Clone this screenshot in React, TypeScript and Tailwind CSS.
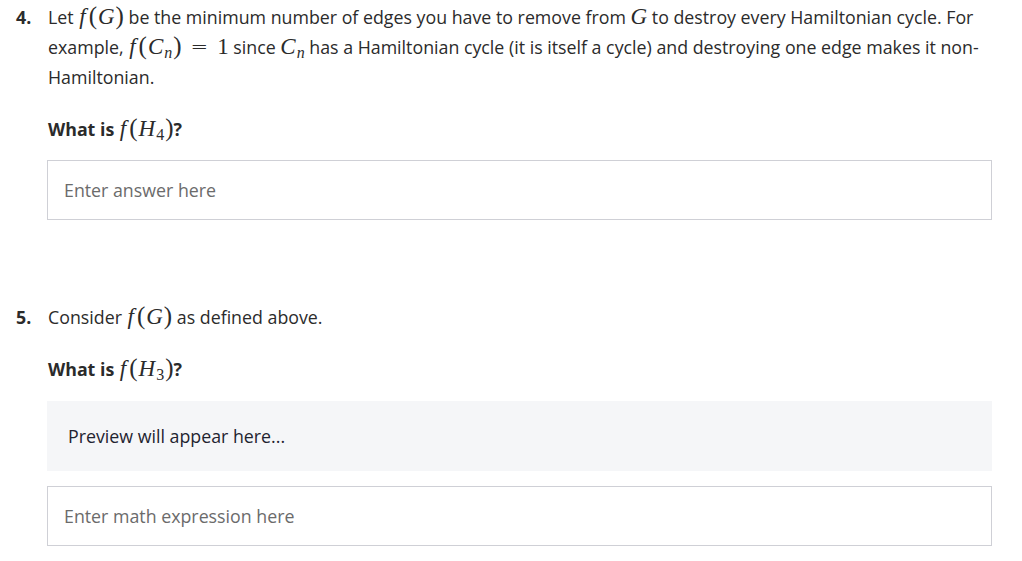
import React from "react";

const M = ({ children }: { children: React.ReactNode }) => (
  <span className="font-['Liberation_Serif',serif] text-[23px] leading-none">{children}</span>
);
const F = () => <i className="italic mr-[3px] ml-[1px]">f</i>;
const I = ({ children }: { children: React.ReactNode }) => <i className="italic">{children}</i>;
const Sub = ({ children }: { children: React.ReactNode }) => (
  <span className="text-[16px] relative top-[4px] ml-[1px]">{children}</span>
);
const L = () => <span className="text-[25px] font-light mr-[1px]">(</span>;
const R = () => <span className="text-[25px] font-light ml-[1px]">)</span>;
const Eq = () => (
  <span className="font-['DejaVu_Sans',sans-serif] text-[21px] font-light mx-[9px]">=</span>
);

export default function App() {
  return (
    <div className="bg-white w-[1022px] h-[561px] overflow-hidden font-['Open_Sans',sans-serif] text-[17.8px] text-[#2b2b2b] leading-[30px]">
      <div className="flex pt-[2px]">
        <div className="w-[47px] shrink-0 pl-[16px] font-bold">4.</div>
        <div className="w-[945px]">
          <p className="whitespace-nowrap pl-[1px]">
            Let <M><F /><L /><I>G</I><R /></M> be the minimum number of edges you have to remove from <M><I>G</I></M> to destroy every Hamiltonian cycle. For
            <br />
            example, <M><F /><L /><I>C</I><Sub><I>n</I></Sub><R /><Eq />1</M> since <M><I>C</I><Sub><I>n</I></Sub></M> has a Hamiltonian cycle (it is itself a cycle) and destroying one edge makes it non-
            <br />
            Hamiltonian.
          </p>
          <p className="mt-[22px] font-bold pl-[1px]">
            What is <span className="font-normal"><M><F /><L /><I>H</I><Sub>4</Sub><R /></M></span>?
          </p>
          <div className="mt-[16px] h-[60px] border border-[#cfd0d6] flex items-center pl-[16px] text-[#6b6b6b]">
            Enter answer here
          </div>
        </div>
      </div>
      <div className="flex mt-[82px]">
        <div className="w-[47px] shrink-0 pl-[16px] font-bold">5.</div>
        <div className="w-[945px]">
          <p className="pl-[1px]">
            Consider <M><F /><L /><I>G</I><R /></M> as defined above.
          </p>
          <p className="mt-[22px] font-bold pl-[1px]">
            What is <span className="font-normal"><M><F /><L /><I>H</I><Sub>3</Sub><R /></M></span>?
          </p>
          <div className="mt-[17px] h-[70px] bg-[#f5f6f8] flex items-center pl-[21px] text-[#1f2430]">
            Preview will appear here...
          </div>
          <div className="mt-[15px] h-[60px] border border-[#cfd0d6] flex items-center pl-[16px] text-[#6b6b6b]">
            Enter math expression here
          </div>
        </div>
      </div>
    </div>
  );
}
